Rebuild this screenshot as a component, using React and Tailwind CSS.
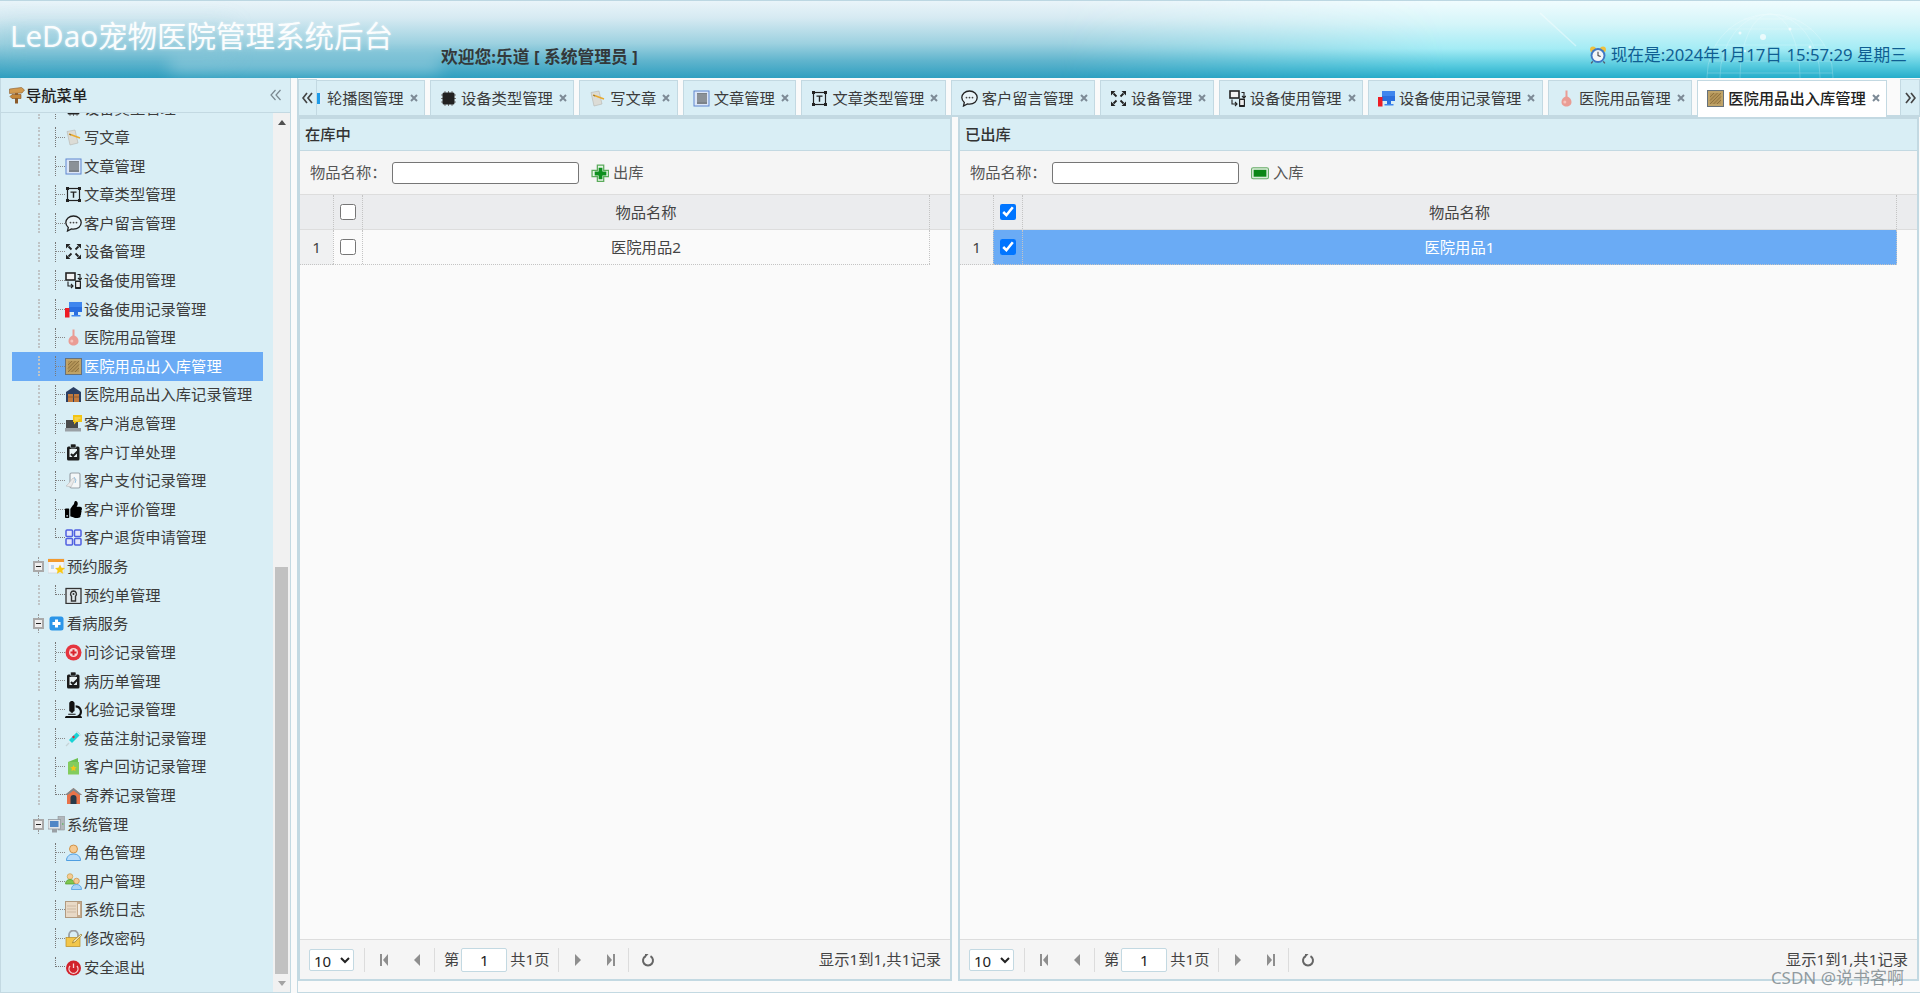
import { FaMicroscope, FaThumbsUp } from "react-icons/fa";

const Svg = ({ children, size = 17 }) => (
	<svg width={size} height={size} viewBox="0 0 17 17" className="shrink-0">
		{children}
	</svg>
);

const icons = {
	slide: (
		<>
			<rect x="1" y="3" width="15" height="11" rx="1" fill="#dfeef8" />
			<rect x="11" y="3" width="3" height="11" fill="#1e9be8" />
		</>
	),
	chip: (
		<>
			<path d="M5 1v15M8.5 1v15M12 1v15M1 5h15M1 8.5h15M1 12h15" stroke="#777" strokeWidth="1" />
			<rect x="2.5" y="2.5" width="12" height="12" rx="1.5" fill="#222" />
		</>
	),
	write: (
		<>
			<path d="M2 2.5l8-1.5 3 13-8 2z" fill="#dcdcd6" stroke="#b5b5b0" strokeWidth=".6" />
			<path d="M4 5l11 4" stroke="#e8a92c" strokeWidth="1.6" />
			<path d="M4 5l2 .4-.6 1.2z" fill="#555" />
		</>
	),
	article: (
		<>
			<rect x="1" y="1" width="15" height="15" fill="#dbe6f7" stroke="#5f86cf" />
			<rect x="4" y="3" width="10" height="11" fill="#7c8288" />
			<path d="M4 5h10M4 7h10M4 9h10M4 11h10" stroke="#a9afb4" strokeWidth=".7" />
		</>
	),
	type: (
		<>
			<rect x="2.5" y="2.5" width="12" height="12" fill="none" stroke="#222" strokeWidth="1.2" />
			<path d="M1 1h3v3H1zM13 1h3v3h-3zM1 13h3v3H1zM13 13h3v3h-3z" fill="#222" />
			<path d="M5.5 5.5h6v1.2H9.2v5H7.8v-5H5.5z" fill="#222" />
		</>
	),
	comment: (
		<>
			<path d="M8.5 1C4 1 .8 4 .8 7.6c0 2 1 3.6 2.5 4.8l-.8 3.6 3.9-2.1c.7.2 1.4.3 2.1.3 4.5 0 7.7-3 7.7-6.6S13 1 8.5 1z" fill="#e8f3f7" stroke="#222" strokeWidth="1.3" />
			<circle cx="5.5" cy="7.6" r=".9" fill="#444" />
			<circle cx="8.5" cy="7.6" r=".9" fill="#444" />
			<circle cx="11.5" cy="7.6" r=".9" fill="#444" />
		</>
	),
	device: (
		<>
			<path d="M6.5 6.5L3.5 3.5M10.5 6.5l3-3M6.5 10.5l-3 3M10.5 10.5l3 3" stroke="#222" strokeWidth="1.8" />
			<path d="M1 5.5V1h4.500zM16 5.500V1h-4.500zM1 11.500V16h4.500zM16 11.500V16h-4.500z" fill="#222" />
		</>
	),
	deviceUse: (
		<>
			<rect x="1" y="1" width="9" height="7" fill="#f2f2f2" stroke="#222" strokeWidth="1.6" />
			<rect x="10" y="8.5" width="6" height="8.5" rx=".7" fill="#222" />
			<rect x="11.2" y="10" width="3.6" height="5" fill="#eee" />
			<path d="M12.5 2.5H15V7M13 6l2 2 2-2M3 9.5V14h5M6 12l2 2-2 2" fill="none" stroke="#222" strokeWidth="1.1" />
		</>
	),
	record: (
		<>
			<rect x="4" y="1" width="13" height="10" fill="#3f86ee" />
			<rect x="4" y="6" width="13" height="5" fill="#2a6fe0" />
			<rect x="9" y="11" width="4" height="3" fill="#2a6fe0" />
			<rect x="6.5" y="14" width="9" height="1.5" fill="#3f86ee" />
			<rect x="0" y="7" width="4.5" height="9.5" fill="#ee1c25" />
		</>
	),
	bottle: (
		<>
			<path d="M7.5.5h2v6c2.500 1.200 4 3 4 5.500 0 2.800-2.200 4.500-5 4.500s-5-1.700-5-4.500c0-2.500 1.500-4.300 4-5.500z" fill="#ea9c94" />
			<circle cx="6.8" cy="12" r="1.5" fill="#f6c4bd" />
		</>
	),
	crate: (
		<>
			<rect x=".5" y=".5" width="16" height="16" fill="#bfa368" stroke="#66717a" />
			<rect x="3" y="3" width="11" height="11" fill="#b39458" />
			<path d="M3 14L14 3M3 10.5L10.5 3M6.5 14L14 6.5M3 7l4-4M10 14l4-4" stroke="#8a6e3c" strokeWidth=".9" />
		</>
	),
	store: (
		<>
			<path d="M8.5 1L16 6v10H1V6z" fill="#2b3f63" />
			<rect x="3" y="8" width="5" height="8" fill="#c27a3e" />
			<rect x="9" y="8" width="5" height="8" fill="#c27a3e" />
			<path d="M3 11h11" stroke="#8e5528" strokeWidth=".8" />
		</>
	),
	message: (
		<>
			<rect x="1" y="5" width="12" height="9" fill="#4a4a4a" />
			<rect x="0" y="13" width="16" height="3.5" fill="#9aa0a5" />
			<path d="M8 0h9v7h-5.500L9 9.500V7H8z" fill="#f3c413" />
			<path d="M9.5 3h6M9.5 5h4" stroke="#fff2b0" strokeWidth=".7" />
		</>
	),
	order: (
		<>
			<rect x="2" y="2.5" width="12.5" height="14" rx="1.5" fill="#1c1c1c" />
			<rect x="5.5" y="0" width="5.5" height="4" rx="1" fill="#1c1c1c" stroke="#d9eef5" strokeWidth=".6" />
			<rect x="4.5" y="5" width="7.5" height="8" fill="#e9f2f4" />
			<path d="M6 10l2 2 5-5" stroke="#1c1c1c" strokeWidth="2" fill="none" />
		</>
	),
	pay: (
		<>
			<rect x="5" y="1" width="10" height="15" rx="1.5" fill="#f4f7f8" stroke="#9aa3aa" strokeWidth="1.2" />
			<path d="M1 14c2-1 5-6 7-8l2 1-4 8z" fill="#eaeaea" stroke="#b9b9b9" strokeWidth=".6" />
			<path d="M9 5l2 3-1 3" stroke="#7fb2d8" strokeWidth=".8" fill="none" />
		</>
	),
	thumb: <FaThumbsUp size={17} color="#000" className="shrink-0" />,
	grid: (
		<>
			<rect x="1" y="1" width="6.5" height="6.5" rx="1" fill="#e4e7fa" stroke="#4f5fe0" strokeWidth="1.5" />
			<rect x="9.5" y="1" width="6.5" height="6.5" rx="1" fill="#e4e7fa" stroke="#4f5fe0" strokeWidth="1.5" />
			<rect x="1" y="9.5" width="6.5" height="6.5" rx="1" fill="#e4e7fa" stroke="#4f5fe0" strokeWidth="1.5" />
			<rect x="9.5" y="9.5" width="6.5" height="6.5" rx="1" fill="#e4e7fa" stroke="#4f5fe0" strokeWidth="1.5" />
		</>
	),
	booking: (
		<>
			<rect x="0" y="1" width="16" height="14" fill="#f3f6f9" stroke="#c8ced4" strokeWidth=".6" />
			<rect x="0" y="1" width="16" height="3" fill="#f29a2e" />
			<rect x="3" y="7" width="3" height="4" fill="#bcd4ee" />
			<path d="M12 6.5l1.500 3.200 3.500.4-2.600 2.300.7 3.400-3.100-1.800-3.100 1.800.7-3.400L7 10.100l3.500-.4z" fill="#f7c815" />
		</>
	),
	repair: (
		<>
			<rect x="1" y="1.5" width="15" height="15" fill="#dfe8ec" stroke="#333" strokeWidth="1.3" />
			<path d="M8.5 4a3 3 0 0 0-2 5.200V14h4V9.200A3 3 0 0 0 8.500 4z" fill="none" stroke="#333" strokeWidth="1.4" />
			<circle cx="8.5" cy="7" r="1" fill="#333" />
		</>
	),
	health: (
		<>
			<rect x="1.5" y="1.5" width="14" height="14" rx="2.5" fill="#2b95e8" />
			<path d="M7 4.5h3V7h2.500v3H10v2.500H7V10H4.500V7H7z" fill="#fff" />
		</>
	),
	consult: (
		<>
			<circle cx="8.5" cy="8.5" r="8" fill="#e5343e" />
			<circle cx="8.5" cy="8.5" r="4.5" fill="#f6dadb" />
			<path d="M7.5 5.5h2v2h2v2h-2v2h-2v-2h-2v-2h2z" fill="#d8232d" />
		</>
	),
	micro: <FaMicroscope size={17} color="#111" className="shrink-0" />,
	syringe: (
		<>
			<path d="M12.5 1.5l3 3-8.500 8.500-3-3z" fill="#19d3d6" />
			<path d="M4 13L1 16" stroke="#c6d3d6" strokeWidth="1.3" />
			<path d="M11 1l5 5" stroke="#d6e4e6" strokeWidth="1.2" />
			<path d="M8.5 5.5l1.500 1.500-1.500 1.500L7 7z" fill="#dc2b3a" />
		</>
	),
	visit: (
		<>
			<path d="M3 4l10-4v16H3z" fill="#6cc04f" />
			<rect x="3" y="4" width="11" height="12.5" fill="#83cc5d" />
			<path d="M8.5 7l1 2 2.200.3-1.600 1.500.4 2.200-2-1.100-2 1.100.4-2.200-1.600-1.500 2.200-.3z" fill="#f5c518" />
		</>
	),
	kennel: (
		<>
			<path d="M8.5 1L17 8h-2v9H2V8H0z" fill="#e8734a" />
			<path d="M8.5 1L17 8h-2.500L8.500 3.500 2.500 8H0z" fill="#7f8b90" />
			<path d="M5.5 17v-6a3 3 0 0 1 6 0v6z" fill="#263a4a" />
		</>
	),
	system: (
		<>
			<rect x="10" y="0" width="6.5" height="14" fill="#b2b7bb" stroke="#858a8e" strokeWidth=".5" />
			<rect x="0" y="3.5" width="12.5" height="9.5" fill="#dfe4e8" stroke="#8b9196" strokeWidth=".7" />
			<rect x="2" y="5" width="8.5" height="6" fill="#4f86c6" />
			<rect x="4" y="13" width="5" height="3.5" fill="#9aa0a5" />
			<circle cx="14.8" cy="8" r=".8" fill="#4bb34b" />
		</>
	),
	role: (
		<>
			<circle cx="8.5" cy="5" r="4" fill="#f6cb93" stroke="#cc8a3d" strokeWidth=".9" />
			<path d="M1.5 16.5c0-4 3-6.500 7-6.500s7 2.500 7 6.500z" fill="#b8dcfa" stroke="#3f95de" strokeWidth=".9" />
		</>
	),
	users: (
		<>
			<circle cx="5" cy="3.5" r="2.8" fill="#f6cb93" stroke="#c9a14a" strokeWidth=".7" />
			<path d="M.5 11c0-3 2-4.500 4.500-4.500S9.500 8 9.500 11z" fill="#7fc64f" stroke="#4f9a2a" strokeWidth=".7" />
			<circle cx="11.5" cy="8" r="2.8" fill="#f6cb93" stroke="#cc8a3d" strokeWidth=".7" />
			<path d="M6.5 16.5c0-3.500 2.200-5 5-5s5 1.500 5 5z" fill="#a9d5f8" stroke="#3f95de" strokeWidth=".7" />
		</>
	),
	log: (
		<>
			<rect x=".5" y=".5" width="16" height="16" fill="#e8d9c6" stroke="#b19a80" />
			<rect x="12" y="1" width="4" height="15" fill="#c4a98a" />
			<rect x="13" y="3" width="2" height="11" fill="#f5efe6" />
			<path d="M2 5h9M2 8h9M2 11h9" stroke="#c2ad94" strokeWidth=".7" />
		</>
	),
	lock: (
		<>
			<path d="M4 8V5a4.500 4.500 0 0 1 9 0v3" fill="none" stroke="#9aa0a5" strokeWidth="1.8" />
			<rect x="1" y="7.5" width="14" height="9" fill="#f2c64a" stroke="#b98a22" strokeWidth=".7" />
			<path d="M16 4l1 1-7 7-2.500 1 1-2.500z" fill="#f6e7b0" stroke="#8a6a1e" strokeWidth=".6" />
		</>
	),
	logout: (
		<>
			<circle cx="8.5" cy="9" r="7.5" fill="#d1222b" />
			<path d="M5 7a4.500 4.500 0 1 0 7 0" fill="none" stroke="#f7d7d7" strokeWidth="1.3" />
			<path d="M8.5 4.5V9" stroke="#f7d7d7" strokeWidth="1.3" />
		</>
	),
	clock: (
		<>
			<circle cx="3.8" cy="3.2" r="2.8" fill="#eec13d" />
			<circle cx="13.2" cy="3.2" r="2.8" fill="#eec13d" />
			<path d="M3.5 14.5L2 16.5M13.5 14.5L15 16.5" stroke="#556" strokeWidth="1.2" />
			<circle cx="8.5" cy="9" r="7" fill="#3f78c4" />
			<circle cx="8.5" cy="9" r="5.2" fill="#f4f6f8" />
			<path d="M8.5 5.5V9l2.500 1" fill="none" stroke="#444" strokeWidth="1" />
		</>
	),
	sign: (
		<>
			<path d="M7 5h3v11.500H7z" fill="#8a5a2b" />
			<path d="M1.5 2l12-1.500 3 2.500-2.500 3-12.500.5z" fill="#d29a4e" stroke="#8a5a2b" strokeWidth=".6" />
			<path d="M13 7.5H4L2 9.500l2 2h9z" fill="#c58738" stroke="#7d5026" strokeWidth=".6" />
		</>
	),
	out: (
		<>
			<path d="M6 1h6v5h4.500v6H12v4.500H6V12H1V6h5z" fill="#e8f6e8" stroke="#5cab5c" strokeWidth="1.2" />
			<path d="M7.2 3.5h3.600v3.700h3.700v3.600h-3.700v3.700H7.200v-3.700H3.500V7.200h3.700z" fill="#0e8f1e" />
		</>
	),
	in: (
		<>
			<rect x=".5" y="3.5" width="16" height="10.5" rx="1.5" fill="#d9ecd9" stroke="#69ad69" />
			<rect x="2.5" y="5.5" width="12" height="6.5" fill="#0c8716" />
		</>
	),
};

const Icon = ({ name, size = 17 }) => {
	if (name === "thumb" || name === "micro") return icons[name];
	return <Svg size={size}>{icons[name]}</Svg>;
};

const treeRows = [
	{ label: "设备类型管理", icon: "chip" },
	{ label: "写文章", icon: "write" },
	{ label: "文章管理", icon: "article" },
	{ label: "文章类型管理", icon: "type" },
	{ label: "客户留言管理", icon: "comment" },
	{ label: "设备管理", icon: "device" },
	{ label: "设备使用管理", icon: "deviceUse" },
	{ label: "设备使用记录管理", icon: "record" },
	{ label: "医院用品管理", icon: "bottle" },
	{ label: "医院用品出入库管理", icon: "crate", selected: true },
	{ label: "医院用品出入库记录管理", icon: "store" },
	{ label: "客户消息管理", icon: "message" },
	{ label: "客户订单处理", icon: "order" },
	{ label: "客户支付记录管理", icon: "pay" },
	{ label: "客户评价管理", icon: "thumb" },
	{ label: "客户退货申请管理", icon: "grid", last: true },
	{ label: "预约服务", icon: "booking", group: true },
	{ label: "预约单管理", icon: "repair", last: true },
	{ label: "看病服务", icon: "health", group: true },
	{ label: "问诊记录管理", icon: "consult" },
	{ label: "病历单管理", icon: "order" },
	{ label: "化验记录管理", icon: "micro" },
	{ label: "疫苗注射记录管理", icon: "syringe" },
	{ label: "客户回访记录管理", icon: "visit" },
	{ label: "寄养记录管理", icon: "kennel", last: true },
	{ label: "系统管理", icon: "system", group: true },
	{ label: "角色管理", icon: "role", noGuide: true },
	{ label: "用户管理", icon: "users", noGuide: true },
	{ label: "系统日志", icon: "log", noGuide: true },
	{ label: "修改密码", icon: "lock", noGuide: true },
	{ label: "安全退出", icon: "logout", noGuide: true, last: true },
];

const tabs = [
	{ label: "轮播图管理", icon: "slide" },
	{ label: "设备类型管理", icon: "chip" },
	{ label: "写文章", icon: "write" },
	{ label: "文章管理", icon: "article" },
	{ label: "文章类型管理", icon: "type" },
	{ label: "客户留言管理", icon: "comment" },
	{ label: "设备管理", icon: "device" },
	{ label: "设备使用管理", icon: "deviceUse" },
	{ label: "设备使用记录管理", icon: "record" },
	{ label: "医院用品管理", icon: "bottle" },
	{ label: "医院用品出入库管理", icon: "crate", active: true },
];

const TreeRow = ({ row }) => {
	if (row.group) {
		return (
			<div className="flex items-center h-[28.62px] ml-[11px] w-[251px] text-[#3c3c3c]">
				<div className="flex flex-col items-center w-[11px] ml-[21px] mr-[4px]">
					<span className="h-[4px] border-l border-dotted border-[#999]" />
					<span className="flex items-center justify-center w-[11px] h-[11px] border-2 border-[#a9a9a9] bg-[#eee]">
						<span className="w-[5px] h-px bg-[#222]" />
					</span>
					<span className="h-[4px] border-l border-dotted border-[#999]" />
				</div>
				<Icon name={row.icon} />
				<span className="ml-[2px]">{row.label}</span>
			</div>
		);
	}
	return (
		<div
			className={`flex items-center h-[28.62px] ml-[11px] w-[251px] ${
				row.selected ? "bg-[#6aabf5] text-white" : "text-[#3c3c3c]"
			}`}
		>
			<div className="w-[17px] ml-[26px] flex items-center">
				{!row.noGuide && <span className="h-[20px] border-l-2 border-dotted border-[#bfc4c6]" />}
			</div>
			{row.last ? (
				<span className="w-[10px] h-[10px] mb-[10px] border-l border-b border-dotted border-[#777]" />
			) : (
				<span className="flex items-center w-[10px] h-[20px] border-l border-dotted border-[#777]">
					<span className="w-full border-t border-dotted border-[#888]" />
				</span>
			)}
			<Icon name={row.icon} />
			<span className="ml-[2px] whitespace-nowrap">{row.label}</span>
		</div>
	);
};

const Sidebar = () => (
	<aside className="flex flex-col w-[291px] shrink-0 bg-[#d9eef5] border-l border-b border-r border-[#c3d9e2]">
		<div className="flex items-center h-[35px] shrink-0 pl-[7px] pr-[8px] border-b border-[#c3d9e2]">
			<Icon name="sign" />
			<span className="ml-[1px] font-medium text-[#222]">导航菜单</span>
			<svg width="12" height="12" viewBox="0 0 12 12" className="ml-auto">
				<path d="M5.5 1L1 6l4.500 5M10.500 1L6 6l4.500 5" fill="none" stroke="#7a8890" strokeWidth="1.2" />
			</svg>
		</div>
		<div className="flex flex-1 min-h-0">
			<div className="flex-1 overflow-hidden">
				<div className="-mt-[18.5px]">
					{treeRows.map((row) => (
						<TreeRow key={row.label + row.icon} row={row} />
					))}
				</div>
			</div>
			<div className="flex flex-col items-center w-[17px] bg-[#f1f1f1]">
				<svg width="8" height="5" viewBox="0 0 8 5" className="mt-[7px] shrink-0">
					<path d="M4 0l4 5H0z" fill="#505050" />
				</svg>
				<div className="w-[13px] h-[407px] mt-[442px] bg-[#c1c1c1]" />
				<svg width="8" height="5" viewBox="0 0 8 5" className="mt-[7px] shrink-0">
					<path d="M4 5L0 0h8z" fill="#a3a3a3" />
				</svg>
			</div>
		</div>
	</aside>
);

const Tab = ({ tab, first }) => (
	<div
		className={`flex items-center shrink-0 pl-[9px] pr-[6.5px] border border-b-0 border-[#c3d9e2] ${
			first ? "-ml-[21px]" : ""
		} ${tab.active ? "h-[37px] pb-[2px] bg-white font-medium text-[#222]" : "h-[35px] bg-[#d9eef5] text-[#3c3c3c]"}`}
	>
		<Icon name={tab.icon} />
		<span className="ml-[4px] mr-[6px] whitespace-nowrap">{tab.label}</span>
		<svg width="8" height="8" viewBox="0 0 8 8" className="shrink-0">
			<path d="M1 1l6 6M7 1L1 7" stroke="#7d8a96" strokeWidth="2" />
		</svg>
	</div>
);

const TabBar = () => (
	<div className="flex items-end h-[39px] shrink-0 border-b-2 border-[#c3d9e2]">
		<button className="flex items-center justify-center w-[19px] h-[36px] bg-[#d9eef5] border border-b-0 border-[#c3d9e2] shrink-0">
			<svg width="11" height="12" viewBox="0 0 11 12">
				<path d="M5 1L1 6l4 5M10 1L6 6l4 5" fill="none" stroke="#444" strokeWidth="1.7" />
			</svg>
		</button>
		<div className="flex items-start gap-[5px] flex-1 min-w-0 h-[35px] overflow-x-clip">
			{tabs.map((tab, i) => (
				<Tab key={tab.label} tab={tab} first={i === 0} />
			))}
		</div>
		<button className="flex items-center justify-center w-[20px] h-[36px] bg-[#d9eef5] border border-b-0 border-[#c3d9e2] shrink-0">
			<svg width="11" height="12" viewBox="0 0 11 12">
				<path d="M1 1l4 5-4 5M6 1l4 5-4 5" fill="none" stroke="#444" strokeWidth="1.7" />
			</svg>
		</button>
	</div>
);

const Sep = () => <span className="block w-px h-[24px] bg-[#dcdcdc] shrink-0" />;

const PagerBtn = ({ d, ml = "" }) => (
	<span className={`flex items-center justify-center w-[33px] ${ml}`}>
		<svg width="12" height="14" viewBox="0 0 12 14">
			<path d={d} fill="#8e8e8e" />
		</svg>
	</span>
);

const Pager = () => (
	<div className="flex items-center h-[40px] shrink-0 pl-[9px] pr-[9px] bg-[#f5f5f5] border-t border-[#dddddd] leading-none text-[#444]">
		<select className="w-[45px] h-[22px] bg-white border border-[#c3d9e2] rounded-[2px] text-[15px] text-[#222]">
			<option>10</option>
		</select>
		<span className="ml-[10px]">
			<Sep />
		</span>
		<PagerBtn d="M2 1h2v12H2zM10 1v12L5 7z" ml="ml-[2px]" />
		<PagerBtn d="M9 1v12L3 7z" />
		<span className="ml-[1px]">
			<Sep />
		</span>
		<span className="ml-[9px]">第</span>
		<input
			defaultValue="1"
			className="w-[46px] h-[24px] ml-[2px] mr-[3px] text-center bg-white border border-[#c3d9e2] rounded-[2px] text-[#222]"
		/>
		<span className="w-[40px] whitespace-nowrap">共1页</span>
		<span className="ml-[8px]">
			<Sep />
		</span>
		<PagerBtn d="M3 1v12l6-6z" ml="ml-[2px]" />
		<PagerBtn d="M2 1v12l5-6zM8 1h2v12H8z" />
		<span className="ml-[1px]">
			<Sep />
		</span>
		<span className="flex items-center justify-center w-[33px] ml-[2px]">
			<svg width="14" height="14" viewBox="0 0 14 14">
				<path d="M4.5 3.2a5 5 0 1 0 5 0" fill="none" stroke="#666" strokeWidth="2" />
				<path d="M7.5 1H4v4z" fill="#666" />
			</svg>
		</span>
		<span className="ml-auto">显示1到1,共1记录</span>
	</div>
);

const Panel = ({ title, icon, action, checked, item, className }) => (
	<section className={`flex flex-col border-2 border-[#c3d9e2] bg-[#fafafa] ${className}`}>
		<div className="flex items-center h-[32px] shrink-0 pl-[5px] bg-[#d9eef5] border-b border-[#c3d9e2] font-medium text-[#333]">
			{title}
		</div>
		<div className="flex items-center h-[43px] shrink-0 pl-[10px] bg-[#f5f5f5] text-[#555]">
			<span className="w-[82px] shrink-0 whitespace-nowrap">物品名称：</span>
			<input className="w-[187px] h-[22px] bg-white border border-[#767676] rounded-[3px]" />
			<span className="ml-[12px]">
				<Icon name={icon} size={18} />
			</span>
			<span className="ml-[4px]">{action}</span>
		</div>
		<div className="flex h-[36px] shrink-0 bg-[#ebecee] border-y border-[#dddddd] text-[#444]">
			<div className="w-[33px] shrink-0" />
			<div className="flex items-center justify-center w-[30px] shrink-0 border-x border-dotted border-[#c4c4c4]">
				<input type="checkbox" defaultChecked={checked} className="w-4 h-4" />
			</div>
			<div className="flex items-center justify-center flex-1">物品名称</div>
			<div className="w-[21px] shrink-0 border-l border-dotted border-[#c4c4c4]" />
		</div>
		<div className="flex h-[35px] shrink-0 text-[#444]">
			<div className="flex items-center justify-center w-[33px] shrink-0 bg-[#f0f1f2] border-b border-dotted border-[#c4c4c4]">
				1
			</div>
			<div
				className={`flex flex-1 border-b border-dotted border-[#c4c4c4] ${
					checked ? "bg-[#6aabf5] text-white" : "bg-[#fafafa]"
				}`}
			>
				<div className="flex items-center justify-center w-[30px] shrink-0 border-x border-dotted border-[#c4c4c4]">
					<input type="checkbox" defaultChecked={checked} className="w-4 h-4" />
				</div>
				<div className="flex items-center justify-center flex-1 border-r border-dotted border-[#c4c4c4]">{item}</div>
			</div>
			<div className="w-[20px] shrink-0" />
		</div>
		<div className="flex-1" />
		<Pager />
	</section>
);

const HeaderArt = () => (
	<>
		<div className="absolute left-[0px] top-[26px] w-[230px] h-[28px] bg-[#7fc0d4]/30 blur-md" />
		<div className="absolute left-[170px] top-[58px] w-[270px] h-[14px] bg-white/30 blur-sm" />
		<div className="absolute top-0 right-0 bottom-0 w-[860px] bg-[linear-gradient(to_bottom,#f0fcfe_0%,#d4f5f9_30%,#a4ecf5_62%,#56cade_84%,#26adca_100%)] [mask-image:linear-gradient(to_right,transparent,black_45%)]" />
		<svg width="420" height="77" viewBox="0 0 420 77" className="absolute top-0 right-0">
			<path d="M40 12l36 33" stroke="#fff" strokeWidth="1.5" opacity=".4" fill="none" />
			<g fill="none" stroke="#fff" opacity=".3" strokeWidth=".7">
				<circle cx="270" cy="76" r="63" />
				<ellipse cx="270" cy="76" rx="30" ry="63" />
				<ellipse cx="270" cy="76" rx="50" ry="63" />
				<path d="M209 60h122M215 44h110M228 28h84M244 18h52M207 72h126" />
			</g>
			<g fill="#fff" opacity=".7">
				<circle cx="263" cy="36" r="3" />
				<circle cx="240" cy="32" r="1.5" />
				<circle cx="290" cy="28" r="1.5" />
				<circle cx="310" cy="46" r="1.5" />
				<circle cx="245" cy="50" r="1.2" />
			</g>
		</svg>
	</>
);

const Header = () => (
	<header className="relative flex h-[78px] shrink-0 border-t border-[#bcd7e2] overflow-hidden bg-[linear-gradient(to_bottom,#e9f4f9_0%,#d6eaf2_22%,#9dd1e0_55%,#5fb4cd_78%,#2f9fc0_100%)]">
		<HeaderArt />
		<div className="relative w-[441px] shrink-0 pl-[10px] pt-[15px] text-[29.5px] leading-[40px] text-white/95 whitespace-nowrap [text-shadow:0_0_3px_rgba(255,255,255,.5)]">
			LeDao宠物医院管理系统后台
		</div>
		<div className="relative self-end mb-[9px] text-[16.8px] leading-[24px] font-bold text-[#33383a] whitespace-nowrap">
			欢迎您:乐道 [ 系统管理员 ]
		</div>
		<div className="relative flex items-center ml-auto self-end mb-[11px] mr-[13px] text-[16.7px] leading-[24px] text-[#0f5e92] whitespace-nowrap">
			<Icon name="clock" size={18} />
			<span className="ml-[4px]">现在是:2024年1月17日 15:57:29 星期三</span>
		</div>
	</header>
);

const App = () => {
	return (
		<div className="relative flex flex-col w-[1920px] h-[993px] overflow-hidden bg-[#fafafa] text-[15.3px] font-['Noto_Sans','Noto_Sans_CJK_SC',sans-serif]">
			<Header />
			<div className="flex flex-1 min-h-0">
				<Sidebar />
				<main className="flex flex-col flex-1 min-w-0 ml-[6px] border-l border-b border-[#c3d9e2]">
					<TabBar />
					<div className="flex h-[864px] gap-[6px] pr-[1px]">
						<Panel
							className="w-[654px]"
							title="在库中"
							icon="out"
							action="出库"
							item="医院用品2"
						/>
						<Panel
							className="flex-1 min-w-0"
							title="已出库"
							icon="in"
							action="入库"
							checked
							item="医院用品1"
						/>
					</div>
				</main>
			</div>
			<span className="absolute right-[16px] bottom-[7px] text-[17px] leading-none text-[#7f8a8f]/85 whitespace-nowrap">
				CSDN @说书客啊
			</span>
		</div>
	);
};

export default App;
